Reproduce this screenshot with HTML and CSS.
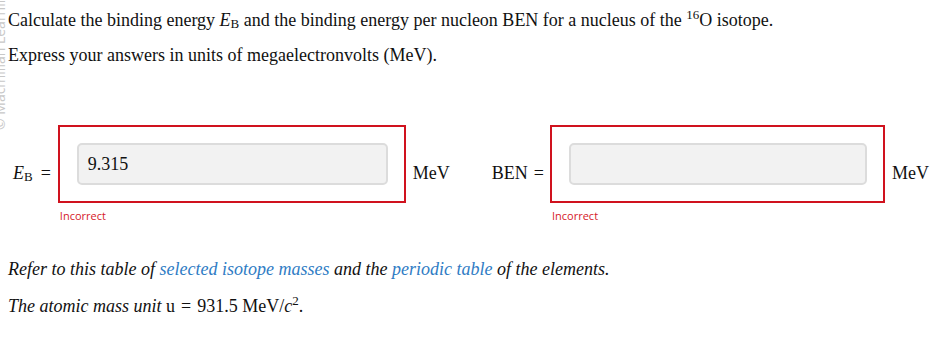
FILE: index.html
```html
<!DOCTYPE html>
<html>
<head>
<meta charset="utf-8">
<link rel="stylesheet" href="styles.css">
</head>
<body>
<div class="watermark">© Macmillan Learning</div>
<div class="page">
  <p class="q q1">Calculate the binding energy <i>E</i><sub>B</sub> and the binding energy per nucleon BEN for a nucleus of the <sup>16</sup>O isotope.</p>
  <p class="q q2">Express your answers in units of megaelectronvolts (MeV).</p>

  <div class="answers">
    <div class="field f1">
      <span class="label lbl1"><i>E</i><sub>B</sub><span class="eq">=</span></span>
      <div class="group">
        <div class="box box1"><div class="input in1">9.315</div></div>
        <div class="status">Incorrect</div>
      </div>
      <span class="unit">MeV</span>
    </div>
    <div class="field f2">
      <span class="label lbl2">BEN<span class="eq">=</span></span>
      <div class="group">
        <div class="box box2"><div class="input in2"></div></div>
        <div class="status">Incorrect</div>
      </div>
      <span class="unit">MeV</span>
    </div>
  </div>

  <p class="note n1"><i>Refer to this table of <a class="lnk">selected isotope masses</a> and the <a class="lnk">periodic table</a> of the elements.</i></p>
  <p class="note n2"><i>The atomic mass unit</i> u<span class="eq">=</span>931.5 MeV/<i>c</i><sup>2</sup>.</p>
</div>
</body>
</html>
```
FILE: styles.css
```css
html, body {
  margin: 0;
  padding: 0;
  background: #fff;
}
body {
  font-family: "Liberation Serif", "Times New Roman", serif;
  color: #111;
  font-size: 18px;
  position: relative;
  width: 934px;
  height: 346px;
  overflow: hidden;
}
.watermark {
  position: absolute;
  left: -5px;
  top: 0;
  transform-origin: 0 0;
  transform: translate(0, 130px) rotate(-90deg);
  font-family: "Open Sans", "Liberation Sans", sans-serif;
  font-size: 14px;
  line-height: 10px;
  color: #c8c8c8;
  white-space: nowrap;
}
.page {
  padding: 9px 0 0 8px;
}
.q, .note {
  margin: 0;
  line-height: 22px;
}
.q2 {
  margin-top: 13px;
}
sub {
  font-size: 13px;
  vertical-align: -2px;
  line-height: 0;
}
sup {
  font-size: 13px;
  vertical-align: 7px;
  line-height: 0;
}
.eq {
  margin: 0 6px 0 6px;
}
.answers {
  display: flex;
  margin-top: 59px;
  align-items: flex-start;
}
.field {
  display: flex;
  align-items: flex-start;
}
.f2 {
  margin-left: 42px;
}
.label, .unit {
  padding-top: 37px;
  line-height: 22px;
  white-space: nowrap;
}
.lbl1 {
  margin-left: 5px;
}
.lbl1 .eq {
  margin-left: 8px;
  margin-right: 7px;
}
.lbl2 .eq {
  margin-left: 6px;
  margin-right: 6px;
}
.unit {
  margin-left: 7px;
}
.box {
  border: 2px solid #d0121e;
  padding: 16px 16px 16px 17px;
}
.box1 { width: 311px; }
.box2 { width: 298px; }
.input {
  box-sizing: border-box;
  height: 42px;
  background: #f2f2f2;
  border: 2px solid #dcdcdc;
  border-radius: 5px;
  padding: 8px 9px 0;
  line-height: 22px;
  font-family: "Liberation Serif", "Times New Roman", serif;
  font-size: 18px;
}
.status {
  font-family: "Open Sans", "Liberation Sans", sans-serif;
  font-size: 11px;
  color: #d6202a;
  margin-top: 5px;
  padding-left: 2px;
  line-height: 16px;
}
.n1 {
  margin-top: 34px;
}
.n2 {
  margin-top: 15px;
}
.lnk {
  color: #2f7cc4;
  text-decoration: none;
}
```
